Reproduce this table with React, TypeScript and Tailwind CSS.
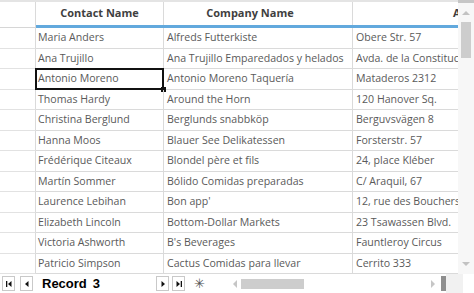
import React from "react";

type Row = { contact: string; company: string; address: string };

const rows: Row[] = [
  { contact: "Maria Anders", company: "Alfreds Futterkiste", address: "Obere Str. 57" },
  { contact: "Ana Trujillo", company: "Ana Trujillo Emparedados y helados", address: "Avda. de la Constitución 2222" },
  { contact: "Antonio Moreno", company: "Antonio Moreno Taquería", address: "Mataderos  2312" },
  { contact: "Thomas Hardy", company: "Around the Horn", address: "120 Hanover Sq." },
  { contact: "Christina Berglund", company: "Berglunds snabbköp", address: "Berguvsvägen  8" },
  { contact: "Hanna Moos", company: "Blauer See Delikatessen", address: "Forsterstr. 57" },
  { contact: "Frédérique Citeaux", company: "Blondel père et fils", address: "24, place Kléber" },
  { contact: "Martín Sommer", company: "Bólido Comidas preparadas", address: "C/ Araquil, 67" },
  { contact: "Laurence Lebihan", company: "Bon app'", address: "12, rue des Bouchers" },
  { contact: "Elizabeth Lincoln", company: "Bottom-Dollar Markets", address: "23 Tsawassen Blvd." },
  { contact: "Victoria Ashworth", company: "B's Beverages", address: "Fauntleroy Circus" },
  { contact: "Patricio Simpson", company: "Cactus Comidas para llevar", address: "Cerrito 333" },
];

const SELECTED = 2;

function Tri({ dir, bar = false }: { dir: "left" | "right"; bar?: boolean }) {
  return (
    <svg width="8" height="8" viewBox="0 0 8 8">
      {dir === "left" ? (
        <>
          {bar && <rect x="1" y="1" width="1.3" height="6" fill="#111" />}
          <polygon points={bar ? "6.5,1 3,4 6.5,7" : "5.5,1 2,4 5.5,7"} fill="#111" />
        </>
      ) : (
        <>
          <polygon points={bar ? "1.5,1 5,4 1.5,7" : "2.5,1 6,4 2.5,7"} fill="#111" />
          {bar && <rect x="5.7" y="1" width="1.3" height="6" fill="#111" />}
        </>
      )}
    </svg>
  );
}

function NavButton({ children }: { children: React.ReactNode }) {
  return (
    <div className="w-[13px] h-[15px] border border-[#c9c9c9] bg-white flex items-center justify-center">
      {children}
    </div>
  );
}

export default function App() {
  return (
    <div
      className="w-[474px] h-[293px] bg-white overflow-hidden flex flex-col"
      style={{ fontFamily: '"Open Sans", "Noto Sans", sans-serif' }}
    >
      <div className="flex h-[274px]">
        {/* grid body */}
        <div className="w-[458px] overflow-hidden border-t-2 border-[#e4e4e4]">
          <div className="w-[700px]">
            {/* column headers */}
            <div className="flex h-[26px] text-[11px] font-bold text-[#3f3f3f]">
              <div className="w-[36px] shrink-0 border-r border-[#dadada] border-b border-b-[#d6d6d6]" />
              <div className="flex flex-1 border-b-[3px] border-b-[#62a9dd]">
                <div className="w-[128px] shrink-0 border-r border-[#dadada] flex items-center justify-center">
                  Contact Name
                </div>
                <div className="w-[189px] shrink-0 border-r border-[#dadada] flex items-center justify-center pr-[16px]">
                  Company Name
                </div>
                <div className="w-[244px] shrink-0 flex items-center justify-center">Address</div>
              </div>
            </div>
            {/* data rows */}
            {rows.map((r, i) => (
              <div key={r.contact} className="flex h-[20.5px] text-[10.6px] text-[#5a5a5a] leading-none">
                <div className="w-[36px] shrink-0 border-r border-[#dadada] border-b border-b-[#e2e2e2]" />
                <div className="w-[128px] shrink-0 relative border-r border-b border-[#dadada] flex items-center pl-[2px] whitespace-nowrap">
                  {r.contact}
                  {i === SELECTED && (
                    <>
                      <div className="absolute left-[-1px] top-[-1px] right-[-1px] bottom-[-1px] border-2 border-[#111]" />
                      <div className="absolute right-[-3px] bottom-[-3px] w-[5px] h-[5px] bg-[#111]" />
                    </>
                  )}
                </div>
                <div className="w-[189px] shrink-0 border-r border-b border-[#dadada] flex items-center pl-[3px] whitespace-nowrap overflow-hidden">
                  {r.company}
                </div>
                <div className="w-[244px] shrink-0 border-b border-[#dadada] flex items-center pl-[3px] whitespace-nowrap">
                  {r.address}
                </div>
              </div>
            ))}
          </div>
        </div>
        {/* vertical scrollbar */}
        <div className="w-[16px] bg-[#f7f7f7] flex flex-col items-center">
          <div className="w-full h-[3px] bg-[#c6c6c6]" />
          <div className="h-[19px] flex items-center justify-center">
            <svg width="8" height="5" viewBox="0 0 8 5">
              <polygon points="0,5 4,1 8,5" fill="#c2c2c2" />
            </svg>
          </div>
          <div className="w-[10px] h-[36px] bg-[#cdcdcd] ml-[-1px]" />
          <div className="flex-1" />
          <div className="h-[16px] flex items-start justify-center pt-[4px]">
            <svg width="8" height="5" viewBox="0 0 8 5">
              <polygon points="0,0 4,4 8,0" fill="#c2c2c2" />
            </svg>
          </div>
        </div>
      </div>
      {/* record navigator + horizontal scrollbar */}
      <div className="flex h-[19px] items-center bg-white">
        <div className="flex items-center pl-[2px] gap-[5px]">
          <NavButton>
            <Tri dir="left" bar />
          </NavButton>
          <NavButton>
            <Tri dir="left" />
          </NavButton>
        </div>
        <div
          className="ml-[9px] w-[114px] flex items-center gap-[6px] text-[13px] font-bold text-black leading-none"
          style={{ fontFamily: '"Liberation Sans", Arial, sans-serif' }}
        >
          <span>Record</span>
          <span>3</span>
        </div>
        <div className="flex items-center gap-[3px]">
          <NavButton>
            <Tri dir="right" />
          </NavButton>
          <NavButton>
            <Tri dir="right" bar />
          </NavButton>
        </div>
        <div className="ml-[9px] w-[12px] text-[13px] text-[#555] leading-none flex items-center">✳</div>
        <div className="ml-[26px] flex items-center h-full">
          <svg width="5" height="8" viewBox="0 0 5 8">
            <polygon points="5,0 1,4 5,8" fill="#c6c6c6" />
          </svg>
          <div className="ml-[4px] w-[63px] h-[10px] bg-[#cdcdcd]" />
          <div className="w-[125px]" />
          <svg width="5" height="8" viewBox="0 0 5 8" className="ml-[2px]">
            <polygon points="0,0 4,4 0,8" fill="#c6c6c6" />
          </svg>
          <div className="ml-[5px] w-[5px] h-[15px] bg-[#8f8f8f]" />
          <div className="w-[17px] h-full bg-[#f1f1f1]" />
        </div>
      </div>
    </div>
  );
}
